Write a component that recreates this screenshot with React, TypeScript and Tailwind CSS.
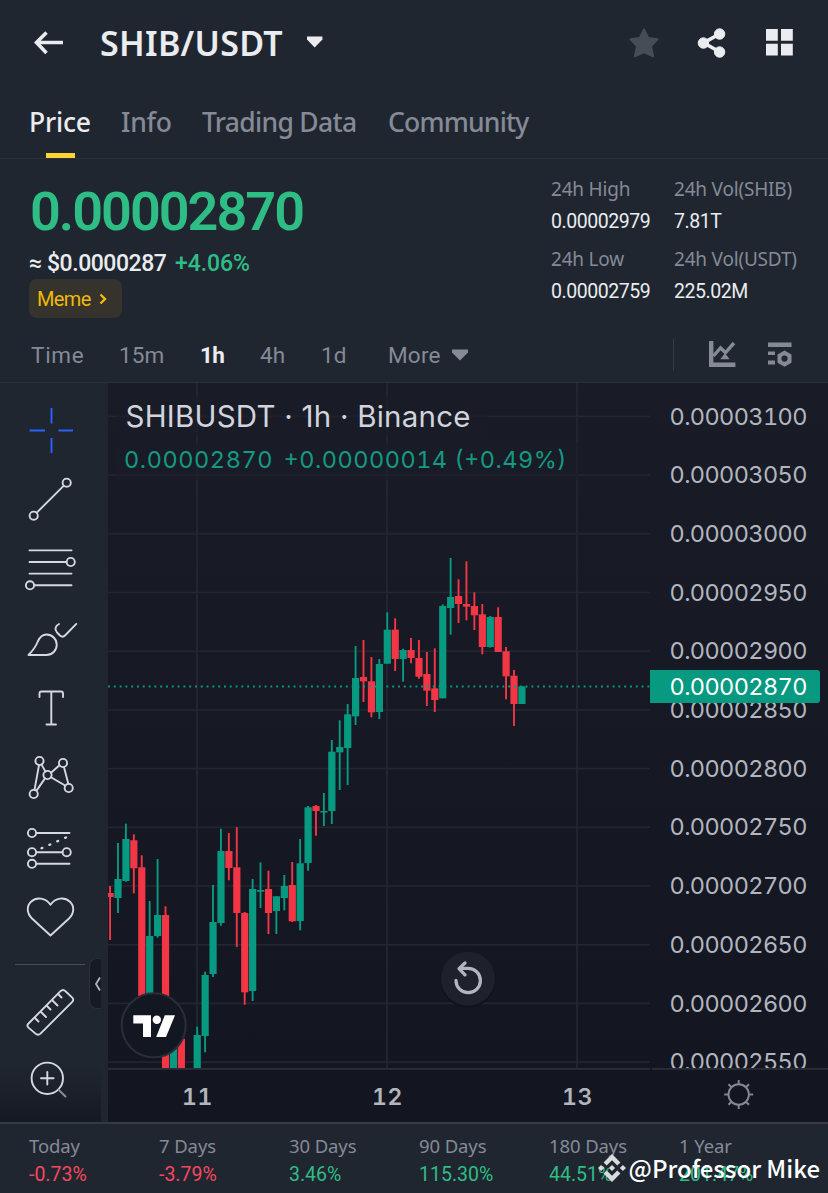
import React from 'react';

type Candle = [high: number, top: number, bottom: number, low: number, dir: 'up' | 'down'];

const UP = '#089981';
const DOWN = '#f23645';

// one entry per hour, in chart pixels
const CANDLES: (Candle | null)[] = [
  [886, 893, 897, 940, 'down'],
  [843, 879, 898, 913, 'up'],
  [823.7, 839, 881, 881.7, 'up'],
  [834.3, 840.3, 868.3, 893.3, 'down'],
  [855.3, 867.3, 996, 997, 'down'],
  [901, 936, 995, 995, 'up'],
  [859, 915, 936, 937.7, 'up'],
  [906.3, 915, 1070, 1070, 'down'],
  [1040, 1040, 1070, 1070, 'up'],
  [1038.7, 1038.7, 1070, 1070, 'down'],
  null,
  [1026.7, 1035, 1070, 1070, 'up'],
  [971.7, 975, 1036, 1052.3, 'up'],
  [885, 922, 974, 977, 'up'],
  [828.7, 851, 923, 925.7, 'up'],
  [833, 851, 868, 880.3, 'down'],
  [827.3, 867.3, 913, 947, 'down'],
  [912, 913, 992.3, 1004.7, 'down'],
  [879, 889, 991, 1001, 'up'],
  [862.3, 890, 891.7, 908, 'up'],
  [870.7, 889, 913, 934, 'down'],
  [896.3, 896.3, 911, 934, 'up'],
  [875, 886, 898, 910.3, 'up'],
  [862, 885, 921.3, 922, 'down'],
  [839, 863.3, 921, 930.3, 'up'],
  [806, 807.3, 863, 870.7, 'up'],
  [805, 806, 811, 835.7, 'down'],
  [793, 811, 812.5, 826, 'up'],
  [740, 751.7, 811, 824, 'up'],
  [720.3, 747, 752.3, 790, 'up'],
  [704, 714.3, 748, 785, 'up'],
  [646, 678, 716.3, 725, 'up'],
  [640, 677, 681.3, 702, 'down'],
  [657, 681.3, 712.3, 717.3, 'down'],
  [659, 664, 712, 719, 'up'],
  [612.3, 629.7, 663.7, 663.7, 'up'],
  [618.3, 629.7, 659, 671, 'down'],
  [648.7, 650, 659, 681.7, 'up'],
  [638, 650, 658, 663.3, 'down'],
  [640, 658, 676.7, 678.7, 'down'],
  [652, 674, 690.7, 706, 'down'],
  [648.3, 688.3, 700, 712, 'down'],
  [604.3, 606, 698.3, 698.3, 'up'],
  [558, 597, 608, 634.7, 'up'],
  [579.3, 596, 604, 623, 'down'],
  [561.3, 604, 606.7, 620.3, 'down'],
  [592.3, 606, 615.3, 630, 'down'],
  [604, 614.3, 647, 654.3, 'down'],
  [616, 617, 647, 647.7, 'up'],
  [607.3, 617, 652, 652, 'down'],
  [647, 651.3, 676.3, 699.3, 'down'],
  [670, 675.7, 704, 726, 'down'],
  [686.3, 686.3, 704, 704, 'up'],
];

const PRICES = [
  '0.00003100',
  '0.00003050',
  '0.00003000',
  '0.00002950',
  '0.00002900',
  '0.00002850',
  '0.00002800',
  '0.00002750',
  '0.00002700',
  '0.00002650',
  '0.00002600',
  '0.00002550',
];

const DAYS = [
  { label: '11', x: 197 },
  { label: '12', x: 387 },
  { label: '13', x: 577 },
];

const TABS = [
  { label: 'Price', className: 'w-[92px] text-[#eaecef] tracking-[-0.2px]' },
  { label: 'Info', className: 'w-[81px] text-[#858a96] tracking-[-0.2px]' },
  { label: 'Trading Data', className: 'w-[186px] text-[#858a96] tracking-[-0.7px]' },
  { label: 'Community', className: 'text-[#858a96] tracking-[-0.8px]' },
];

const INTERVALS = [
  { label: 'Time', className: 'w-[88px] text-[#858a96] tracking-[0.7px]' },
  { label: '15m', className: 'w-[81px] text-[#858a96] tracking-[0.1px]' },
  { label: '1h', className: 'w-[60px] font-bold text-[#eaecef] tracking-[-0.6px]' },
  { label: '4h', className: 'w-[61px] text-[#858a96]' },
  { label: '1d', className: 'w-[67px] text-[#858a96]' },
];

const STATS = [
  { label: '24h High', value: '0.00002979' },
  { label: '24h Vol(SHIB)', value: '7.81T' },
  { label: '24h Low', value: '0.00002759' },
  { label: '24h Vol(USDT)', value: '225.02M' },
];

const CHANGES = [
  { label: 'Today', value: '-0.73%', up: false },
  { label: '7 Days', value: '-3.79%', up: false },
  { label: '30 Days', value: '3.46%', up: true },
  { label: '90 Days', value: '115.30%', up: true },
  { label: '180 Days', value: '44.51%', up: true },
  { label: '1 Year', value: '201.47%', up: true },
];

function Header() {
  return (
    <header className="flex h-[85px] items-center pl-[34px] pr-[35px]">
      <svg className="h-6 w-[30px]" viewBox="0 0 30 24" fill="none" stroke="#eaecef" strokeWidth="3.6">
        <path d="M29 11.5H3M12.5 1.5 2.5 11.5l10 10.5" />
      </svg>
      <h1 className="ml-[36px] w-[207px] whitespace-nowrap font-['Noto_Sans'] text-[34px] font-semibold leading-none tracking-[0.3px] text-[#eaecef]">
        SHIB/USDT
      </h1>
      <svg className="mb-0.5 h-3 w-4" viewBox="0 0 16 12" fill="#eaecef">
        <path d="M0 0.5h15.4v3L7.7 11.6 0 3.5z" />
      </svg>
      <div className="ml-auto flex items-center">
        <svg className="h-[30px] w-[30px]" viewBox="0 0 30 30" fill="#474d57" stroke="#474d57" strokeWidth="2" strokeLinejoin="round">
          <path d="m15 1.5 4.2 8.4 9.3 1.4-6.4 6.8 1.9 10.2L15 24.2l-9 4.1 1.9-10.2-6.4-6.8 9.3-1.4z" />
        </svg>
        <svg className="ml-[38px] h-[30px] w-[30px]" viewBox="0 0 30 30" fill="#eaecef" stroke="#eaecef">
          <path d="M22.5 6 6.5 14.8l16 9" fill="none" strokeWidth="3.6" />
          <circle cx="22.6" cy="6" r="5.2" />
          <circle cx="6.4" cy="15" r="5.2" />
          <circle cx="22.6" cy="24" r="5.2" />
        </svg>
        <svg className="ml-[39px] h-[27px] w-[27px]" viewBox="0 0 27 27" fill="#eaecef">
          <path d="M0 0h11.8v11.8H0zM15 0h11.8v11.8H15zM0 14.8h11.8v11.8H0zM15 14.8h11.8v11.8H15z" />
        </svg>
      </div>
    </header>
  );
}

function Tabs() {
  return (
    <nav className="flex h-[74px] items-stretch border-b border-[#2b313b] pl-[29px] font-['Noto_Sans'] text-[26.5px] font-medium">
      {TABS.map((tab, i) => (
        <div key={tab.label} className={`relative pt-[17px] leading-10 whitespace-nowrap ${tab.className}`}>
          {tab.label}
          {i === 0 && <span className="absolute bottom-0 left-[17px] h-[5px] w-[29px] bg-[#fcd535]" />}
        </div>
      ))}
    </nav>
  );
}

function Ticker() {
  return (
    <section className="flex h-[168px] justify-between pl-[29px]">
      <div className="font-['Roboto']">
        <div className="mt-[25px] h-[56px] pl-px text-[54px] font-semibold leading-[56px] tracking-[-2px] text-[#2ebd85]">
          0.00002870
        </div>
        <div className="mt-[9px] flex h-[30px] items-center whitespace-nowrap text-[23px] font-medium leading-[30px]">
          <span className="w-[146px] tracking-[-0.45px] text-[#eaecef]">≈ $0.0000287</span>
          <span className="tracking-[-0.1px] text-[#2ebd85]">+4.06%</span>
        </div>
        <div className="flex h-[39px] w-[93px] items-center rounded-lg bg-[#35332b] pl-2 text-[20px] text-[#f0b90b]">
          <span className="w-[62px] tracking-[-0.6px]">Meme</span>
          <svg className="h-3 w-2" viewBox="0 0 8 12" fill="none" stroke="#f0b90b" strokeWidth="2.4">
            <path d="m1.5 1.5 4.5 4.5-4.5 4.5" />
          </svg>
        </div>
      </div>
      <div className="grid w-[277px] grid-cols-[123px_154px] content-start pt-[15px]">
        {STATS.map((s) => (
          <div key={s.label} className="h-[70px] whitespace-nowrap">
            <div className="font-['Noto_Sans'] text-[19px] leading-[30px] tracking-[-0.2px] text-[#858a96]">{s.label}</div>
            <div className="mt-[2px] font-['Roboto'] text-[19.5px] leading-[32px] tracking-[-0.45px] text-[#eaecef]">{s.value}</div>
          </div>
        ))}
      </div>
    </section>
  );
}

function Intervals() {
  return (
    <div className="flex h-[56px] items-center border-b border-[#2b313b] pl-[31px] font-['Roboto'] text-[22.5px]">
      {INTERVALS.map((item) => (
        <span key={item.label} className={`pt-0.5 ${item.className}`}>
          {item.label}
        </span>
      ))}
      <span className="w-[64px] pt-0.5 tracking-[0.2px] text-[#858a96]">More</span>
      <svg className="h-3 w-4" viewBox="0 0 16 12" fill="#858a96">
        <path d="M0 0.5h16v3l-8 8-8-8z" />
      </svg>
      <span className="ml-[205px] h-8 w-px bg-[#333b47]" />
      <svg className="ml-[35px] h-[27px] w-[27px]" viewBox="0 0 27 27" fill="#858a96">
        <path d="M0 0h4.4v21.6h22V26H0z" />
        <path d="m4.5 15 7-8 5 4.6L25 2" fill="none" stroke="#858a96" strokeWidth="3.4" />
        <path d="m15.8 12.4 2 2.1 2.8 3.7h-9.3l2.8-3.7z" />
      </svg>
      <svg className="ml-8 h-[25px] w-[25px]" viewBox="0 0 25 25" fill="#858a96">
        <path d="M0 0.5h23.5V5H0zM0 9.5h7V13H0zM0 18.6h7v3.8H0z" />
        <path fillRule="evenodd" d="m16.5 8.5 7 4v8.3l-7 4-7-4v-8.3zm0 5a3.1 3.1 0 1 0 0 6.2 3.1 3.1 0 0 0 0-6.2z" />
      </svg>
    </div>
  );
}

function Tool({ children }: { children: React.ReactNode }) {
  return (
    <svg
      className="block h-[70px] w-[90px] shrink-0"
      viewBox="0 0 90 70"
      fill="none"
      stroke="#d5d8e0"
      strokeWidth="1.9"
      strokeLinecap="round"
      strokeLinejoin="round"
    >
      {children}
    </svg>
  );
}

function Toolbar() {
  return (
    <aside className="relative flex w-[101px] flex-col overflow-hidden bg-[#202630] pt-[13px]">
      <div className="absolute inset-x-0 bottom-0 h-[58px] bg-gradient-to-b from-[#202630] to-[#151924]" />
      <div className="relative flex flex-col">
        {/* crosshair */}
        <Tool>
          <path d="M51.5 12v15.5M51.5 42v15M29.5 34.5H45M58.5 34.5H73" stroke="#2962ff" strokeLinecap="butt" />
        </Tool>
        {/* trend line */}
        <Tool>
          <circle cx="66.7" cy="16.7" r="4.1" />
          <circle cx="33.7" cy="49.7" r="4.1" />
          <path d="m36.8 46.6 26.8-26.8" />
        </Tool>
        {/* fib levels */}
        <Tool>
          <path d="M29.5 14.4h42M29.5 26h37M29.5 37.6h42M34.5 49.3h37" />
          <circle cx="70.7" cy="26" r="4.1" />
          <circle cx="30" cy="49.3" r="4.1" />
        </Tool>
        {/* brush */}
        <Tool>
          <path d="M28.5 49c4.5-4.5 7.5-9 9.300-13.500C40 30.500 43 28.500 46.500 28.500a10.250 10.250 0 0 1 0 20.500z" />
          <path d="M59 18c-4 2-4.500 5.500-2 8.500l3 3c1.800 1.500 3.500 1.500 5 0l11.300-11.600" />
        </Tool>
        {/* text */}
        <Tool>
          <path d="M39.5 21v-3.500q0-2 2-2h19.500q2 0 2 2V21M51.300 15.500v33M46.500 48.500h9.500" />
        </Tool>
        {/* pattern */}
        <Tool>
          <path d="m39 19.200-4.500 24.600M41.500 18.600l4 7M36.500 44.600l8.500-12.200M51 26.800l8.500-7.500M64 21.200l4.300 16.600M51 31.200l14.500 8.600" />
          <circle cx="39.5" cy="15" r="4.1" />
          <circle cx="63" cy="17" r="4.1" />
          <circle cx="47.5" cy="29" r="4.1" />
          <circle cx="68.7" cy="42" r="4.1" />
          <circle cx="33.7" cy="48" r="4.1" />
        </Tool>
        {/* forecast */}
        <Tool>
          <circle cx="32" cy="17" r="4.1" />
          <circle cx="32" cy="36.2" r="4.1" />
          <circle cx="66.7" cy="36.2" r="4.1" />
          <circle cx="32" cy="47.8" r="4.1" />
          <path d="M36.5 17h33M36.5 36.200h26M36.5 47.800h33" />
          <path d="m41.5 32.300 25-11" strokeWidth="2.3" strokeDasharray="1 7.6" />
        </Tool>
        {/* heart */}
        <Tool>
          <path d="M50.5 49.500 32 32.500c-5.500-5.500-5.500-12.500-1-16.800 5.500-5 14.500-4.200 19.500 3 5-7.200 14-8 19.500-3 4.500 4.300 4.500 11.300-1 16.800z" />
        </Tool>
        <div className="mb-[11px] ml-[15px] mt-2 h-px w-[70px] bg-[#4a4d58]" />
        {/* ruler */}
        <Tool>
          <path d="M28.5 47.500 60.500 15.200q2.500-2.500 5 0l6.500 6.200q2.500 2.300 0 4.700L40.500 57.600q-2.500 2.200-5 0l-7-6q-2.200-2 0-4.100z" />
          <path d="m35 42 3.500 3.500M41 36l5 5M47 30l3.500 3.500M52.500 24.500l5 5M58.500 18.500l3 3" />
        </Tool>
        {/* zoom in */}
        <Tool>
          <circle cx="47.3" cy="32.3" r="15.7" />
          <path d="M41 32.300h12.600M47.300 26v12.600" />
          <path d="m58.8 44 6.700 6.500" stroke="#8c909b" />
        </Tool>
      </div>
      <div className="absolute right-0 top-[575px] flex h-[51px] w-3 items-center justify-end rounded-l-lg border border-r-0 border-[#2a2e39] bg-[#161a25]">
        <svg className="h-4 w-[7px]" viewBox="0 0 7 16" fill="none" stroke="#b2b5be" strokeWidth="1.8">
          <path d="M6 1.500 2 8l4 6.500" />
        </svg>
      </div>
    </aside>
  );
}

function Chart() {
  return (
    <svg className="ml-[7px] block h-[739px] w-[720px] tabular-nums" viewBox="108 383 720 739" fontFamily="Inter, sans-serif">
      <defs>
        <linearGradient id="pane" x1="0" y1="0" x2="0" y2="1">
          <stop offset="0" stopColor="#191c27" />
          <stop offset="1" stopColor="#131621" />
        </linearGradient>
        <clipPath id="plot">
          <rect x="108" y="383" width="720" height="685" />
        </clipPath>
      </defs>
      <rect x="108" y="383" width="720" height="739" fill="url(#pane)" />

      <g clipPath="url(#plot)">
        {PRICES.map((p, i) => (
          <rect key={p} x="108" y={415.6 + i * 58.7} width="542" height="1.6" fill="#232731" />
        ))}
        {DAYS.map((d) => (
          <rect key={d.label} x={d.x - 0.8} y="383" width="1.6" height="685" fill="#252933" />
        ))}

        {CANDLES.map((c, i) => {
          if (!c) return null;
          const [high, top, bottom, low, dir] = c;
          const x = 110 + i * 7.92;
          return (
            <g key={i} fill={dir === 'up' ? UP : DOWN}>
              <rect x={x - 0.9} y={high} width="1.9" height={low - high} />
              <rect x={x - 3.5} y={top} width="7.2" height={bottom - top} />
            </g>
          );
        })}
        <path d="M108 686.500h542" stroke={UP} strokeWidth="1.8" strokeDasharray="1.9 3.9" />

        {PRICES.map((p, i) => (
          <text key={p} x="669.5" y={424.5 + i * 58.7} fontSize="23.5" fill="#b2b5be" textLength="138">
            {p}
          </text>
        ))}
      </g>

      {/* legend */}
      <rect x="116" y="396" width="372" height="40" fill="#191c27" opacity="0.5" />
      <rect x="116" y="442" width="462" height="38" fill="#191c27" opacity="0.5" />
      <text className="[font-variant-numeric:normal]" x="125.5" y="426.6" fontSize="29.5" fill="#d1d4dc" textLength="345">
        SHIBUSDT · 1h · Binance
      </text>
      <text x="124" y="467.8" fontSize="23.5" fill="#139a82" textLength="148.5">
        0.00002870
      </text>
      <text x="283.5" y="467.8" fontSize="23.5" fill="#139a82" textLength="283">
        +0.00000014 (+0.49%)
      </text>

      {/* last price */}
      <path d="M650 670h167q3 0 3 3v27q0 3-3 3H650z" fill={UP} />
      <text x="669.5" y="695" fontSize="23.5" fill="#fff" textLength="138">
        0.00002870
      </text>

      {/* provider badge */}
      <circle cx="153.7" cy="1025.3" r="32" fill="#131722" stroke="#2a2e39" strokeWidth="2" />
      <g fill="#fff">
        <path d="M133.3 1015.300h17.700v21.700h-8v-13.500h-9.700z" />
        <circle cx="156.8" cy="1019.7" r="4.2" />
        <path d="M164.8 1015.300h10.200l-9 21.700h-9.800z" />
      </g>

      {/* reset view */}
      <circle cx="468" cy="980" r="27.5" fill="#10131c" />
      <circle cx="468" cy="978.7" r="27" fill="#1d212b" />
      <g fill="none" stroke="#b2b5be" strokeWidth="3.3" strokeLinecap="round" strokeLinejoin="round">
        <path d="M456 980.500a12.200 12.200 0 1 0 12.200-12.200H460" />
        <path d="m465 963-6 5.600 6 6.200" />
      </g>

      {/* time axis */}
      <rect x="108" y="1068" width="542" height="1.8" fill="#2a2e39" />
      <rect x="652" y="1068" width="176" height="1.8" fill="#2a2e39" />
      {DAYS.map((d) => (
        <text key={d.label} x={d.x + 0.5} y="1104.5" fontSize="23" fontWeight="600" letterSpacing="0.5" textAnchor="middle" fill="#b2b5be">
          {d.label}
        </text>
      ))}
      <g stroke="#868993" strokeWidth="1.9" fill="none">
        <circle cx="738.7" cy="1094.5" r="10.2" />
        {[0, 45, 90, 135, 180, 225, 270, 315].map((a) => (
          <path key={a} d="M738.7 1084.300v-4.300" transform={`rotate(${a} 738.7 1094.5)`} />
        ))}
      </g>
    </svg>
  );
}

function Watermark() {
  return (
    <div className="absolute right-[8px] top-[28px] flex items-center">
      <svg className="mr-[3px] h-7 w-7" viewBox="0 0 28 28" fill="#d9dadc">
        <path d="m14 0 8.400 8.400-3.100 3.100L14 6.200l-5.300 5.300-3.100-3.100zM14 28l8.400-8.400-3.100-3.100L14 21.800l-5.300-5.300-3.100 3.100zM3.100 10.900 6.200 14l-3.100 3.100L0 14zM24.900 10.900 28 14l-3.100 3.100-3.100-3.100zM14 10.900l3.100 3.100-3.100 3.100-3.100-3.100z" />
      </svg>
      <span className="whitespace-nowrap font-['Noto_Sans_CJK_SC'] text-[24px] font-medium leading-8 text-white">@Professor Mike</span>
    </div>
  );
}

function Performance() {
  return (
    <footer className="relative flex h-[71px] border-t-2 border-[#363a45] bg-[#202630] pl-[29px]">
      {CHANGES.map((c) => (
        <div key={c.label} className="w-[130px] pt-[8px] whitespace-nowrap">
          <div className="font-['Noto_Sans'] text-[18.5px] leading-[28px] tracking-[-0.1px] text-[#858a96]">{c.label}</div>
          <div className={`mt-[2px] font-['Roboto'] text-[19.5px] leading-[26px] ${c.up ? 'text-[#2ebd85]' : 'text-[#f6465d]'}`}>{c.value}</div>
        </div>
      ))}
      <Watermark />
    </footer>
  );
}

export default function App() {
  return (
    <div className="flex h-[1193px] w-[828px] flex-col overflow-hidden bg-[#202630]">
      <Header />
      <Tabs />
      <Ticker />
      <Intervals />
      <main className="flex h-[739px]">
        <Toolbar />
        <Chart />
      </main>
      <Performance />
    </div>
  );
}
